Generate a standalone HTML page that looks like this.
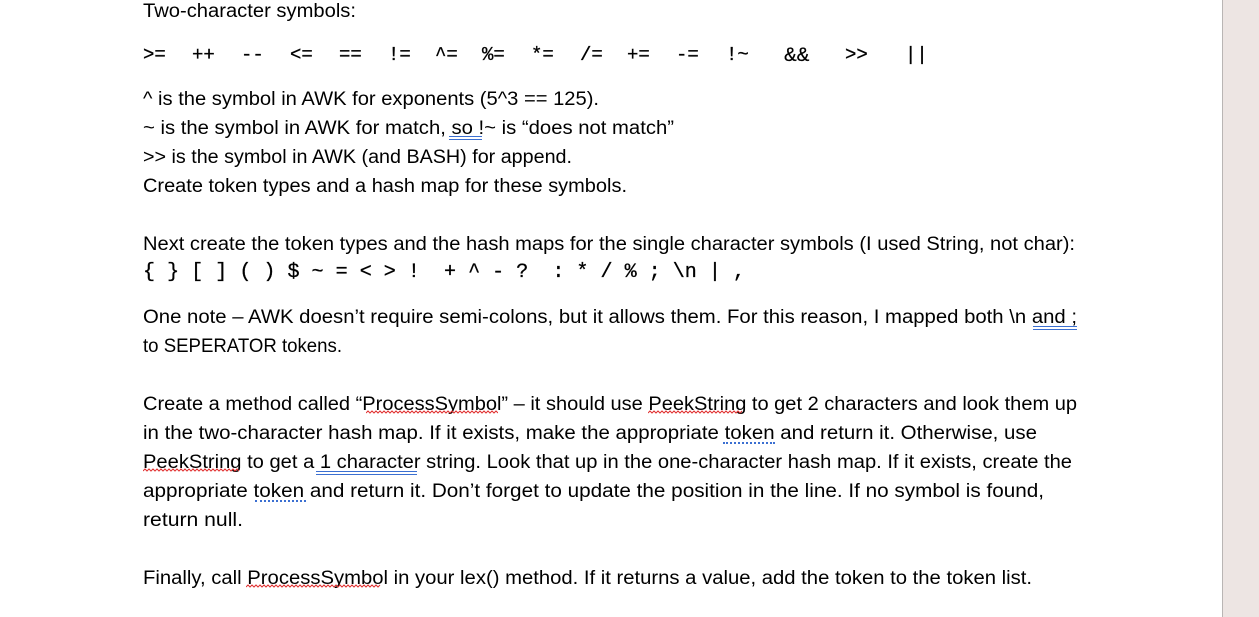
<!DOCTYPE html>
<html><head><meta charset="utf-8"><style>
html,body{margin:0;padding:0;width:1259px;height:617px;overflow:hidden;background:#fff}
#bg{position:absolute;left:1222px;top:0;width:37px;height:617px;background:#ede5e3;border-left:1px solid #b9b5b4}
.l{position:absolute;left:143px;height:29px;line-height:29px;font-family:"Liberation Sans",sans-serif;font-size:19px;color:#000;white-space:nowrap;transform-origin:0 50%}
.s{position:absolute;top:41px;font-family:"Liberation Mono",monospace;font-size:19px;line-height:29px;color:#000;white-space:pre;-webkit-text-stroke:0.3px #000}
.m{position:absolute;left:143px;top:258px;font-family:"Liberation Mono",monospace;font-size:20px;line-height:29px;white-space:pre;transform-origin:0 50%;-webkit-text-stroke:0.3px #000}
.dbl{position:absolute;height:2px;border-top:1px solid #3b6fd1;border-bottom:1px solid #3b6fd1}
.dot{position:absolute;height:0;border-top:2px dotted #3b6fd1}
svg.wav{position:absolute;height:4px}
</style></head><body>
<div id="bg"></div>
<div class="l" data-w="213" style="top:-3px">Two-character symbols:</div>
<div class="s" style="left:143px">&gt;=</div><div class="s" style="left:192px">++</div><div class="s" style="left:241px">--</div><div class="s" style="left:290px">&lt;=</div><div class="s" style="left:339px">==</div><div class="s" style="left:388px">!=</div><div class="s" style="left:435px">^=</div><div class="s" style="left:482px">%=</div><div class="s" style="left:531px">*=</div><div class="s" style="left:580px">/=</div><div class="s" style="left:627px">+=</div><div class="s" style="left:676px">-=</div><div class="s" style="left:726px">!~</div><div class="s" style="left:784px;font-family:'Liberation Sans',sans-serif">&amp;&amp;</div><div class="s" style="left:845px">&gt;&gt;</div><div class="s" style="left:905px">||</div>
<div class="l" data-w="456" style="top:85px">^ is the symbol in AWK for exponents (5^3 == 125).</div>
<div class="l" data-w="531" style="top:114px">~ is the symbol in AWK for match, so !~ is “does not match”</div>
<div class="l" data-w="429" style="top:143px">&gt;&gt; is the symbol in AWK (and BASH) for append.</div>
<div class="l" data-w="484" style="top:172px">Create token types and a hash map for these symbols.</div>
<div class="l" data-w="932" style="top:230px">Next create the token types and the hash maps for the single character symbols (I used String, not char):</div>
<div class="m" data-w="602">{ } [ ] ( ) $ ~ = &lt; &gt; !  + ^ - ?  : * / % ; \n | ,</div>
<div class="l" data-w="934" style="top:303px">One note – AWK doesn’t require semi-colons, but it allows them. For this reason, I mapped both \n and ;</div>
<div class="l" data-w="199" style="top:332px">to SEPERATOR tokens.</div>
<div class="l" data-w="934" style="top:390px">Create a method called “ProcessSymbol” – it should use PeekString to get 2 characters and look them up</div>
<div class="l" data-w="894" style="top:419px">in the two-character hash map. If it exists, make the appropriate token and return it. Otherwise, use</div>
<div class="l" data-w="929" style="top:448px">PeekString to get a 1 character string. Look that up in the one-character hash map. If it exists, create the</div>
<div class="l" data-w="901" style="top:477px">appropriate token and return it. Don’t forget to update the position in the line. If no symbol is found,</div>
<div class="l" data-w="100" style="top:506px">return null.</div>
<div class="l" data-w="889" style="top:564px">Finally, call ProcessSymbol in your lex() method. If it returns a value, add the token to the token list.</div>
<div class="dbl" style="left:449px;top:136px;width:33px"></div>
<div class="dbl" style="left:1033px;top:326px;width:44px"></div>
<div class="dbl" style="left:316px;top:471px;width:101px"></div>
<div class="dot" style="left:723px;top:442px;width:52px"></div>
<div class="dot" style="left:255px;top:500px;width:51px"></div>
<svg class="wav" style="left:366px;top:410px" width="132" height="4"><polyline fill="none" stroke="#e03030" stroke-width="1" points="0,3 2,1 4,3 6,1 8,3 10,1 12,3 14,1 16,3 18,1 20,3 22,1 24,3 26,1 28,3 30,1 32,3 34,1 36,3 38,1 40,3 42,1 44,3 46,1 48,3 50,1 52,3 54,1 56,3 58,1 60,3 62,1 64,3 66,1 68,3 70,1 72,3 74,1 76,3 78,1 80,3 82,1 84,3 86,1 88,3 90,1 92,3 94,1 96,3 98,1 100,3 102,1 104,3 106,1 108,3 110,1 112,3 114,1 116,3 118,1 120,3 122,1 124,3 126,1 128,3 130,1 132,3"/></svg>
<svg class="wav" style="left:648px;top:410px" width="95" height="4"><polyline fill="none" stroke="#e03030" stroke-width="1" points="0,3 2,1 4,3 6,1 8,3 10,1 12,3 14,1 16,3 18,1 20,3 22,1 24,3 26,1 28,3 30,1 32,3 34,1 36,3 38,1 40,3 42,1 44,3 46,1 48,3 50,1 52,3 54,1 56,3 58,1 60,3 62,1 64,3 66,1 68,3 70,1 72,3 74,1 76,3 78,1 80,3 82,1 84,3 86,1 88,3 90,1 92,3 94,1"/></svg>
<svg class="wav" style="left:143px;top:468px" width="96" height="4"><polyline fill="none" stroke="#e03030" stroke-width="1" points="0,3 2,1 4,3 6,1 8,3 10,1 12,3 14,1 16,3 18,1 20,3 22,1 24,3 26,1 28,3 30,1 32,3 34,1 36,3 38,1 40,3 42,1 44,3 46,1 48,3 50,1 52,3 54,1 56,3 58,1 60,3 62,1 64,3 66,1 68,3 70,1 72,3 74,1 76,3 78,1 80,3 82,1 84,3 86,1 88,3 90,1 92,3 94,1 96,3"/></svg>
<svg class="wav" style="left:246px;top:584px" width="135" height="4"><polyline fill="none" stroke="#e03030" stroke-width="1" points="0,3 2,1 4,3 6,1 8,3 10,1 12,3 14,1 16,3 18,1 20,3 22,1 24,3 26,1 28,3 30,1 32,3 34,1 36,3 38,1 40,3 42,1 44,3 46,1 48,3 50,1 52,3 54,1 56,3 58,1 60,3 62,1 64,3 66,1 68,3 70,1 72,3 74,1 76,3 78,1 80,3 82,1 84,3 86,1 88,3 90,1 92,3 94,1 96,3 98,1 100,3 102,1 104,3 106,1 108,3 110,1 112,3 114,1 116,3 118,1 120,3 122,1 124,3 126,1 128,3 130,1 132,3 134,1"/></svg>
<script>
document.querySelectorAll('[data-w]').forEach(function(e){var w=e.getBoundingClientRect().width;var t=+e.getAttribute('data-w');if(w>0)e.style.transform='scaleX('+(t/w)+')';});
</script>
</body></html>
